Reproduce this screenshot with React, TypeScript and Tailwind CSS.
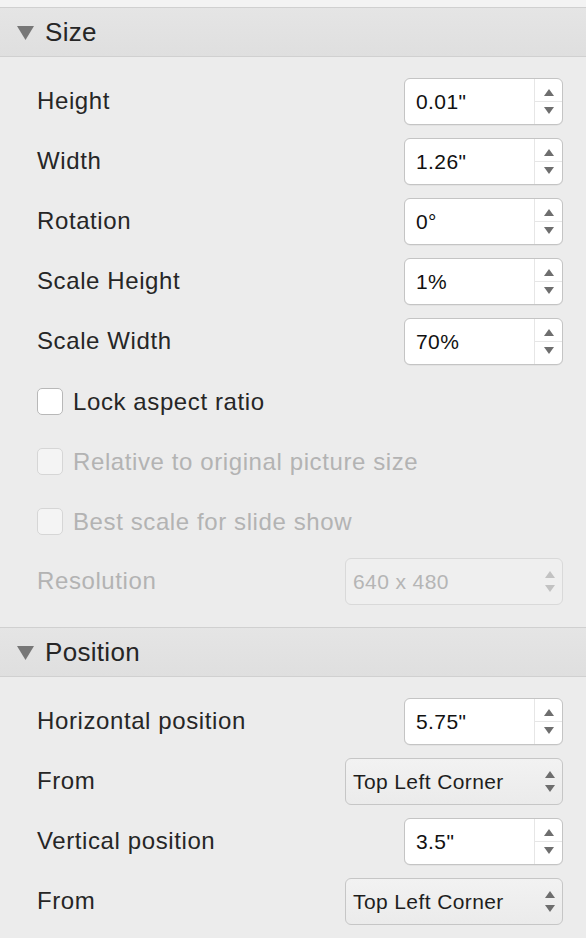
import React from 'react'

const font = { fontFamily: '"Liberation Sans", Arial, sans-serif' }

const Triangle = ({ up, className }: { up?: boolean; className?: string }) => (
    <svg width="10" height="7" viewBox="0 0 10 7" className={className}>
        {up ? <path d="M5 0 L10 7 L0 7 Z" fill="currentColor" /> : <path d="M0 0 L10 0 L5 7 Z" fill="currentColor" />}
    </svg>
)

const SectionHeader: React.FC<{ title: string }> = ({ title }) => (
    <div className="flex items-center h-[50px] border-y border-[#d0d0d0] bg-gradient-to-b from-[#e5e5e5] to-[#dfdfdf] pl-[17px]">
        <svg width="17" height="14" viewBox="0 0 17 14" className="mt-[2px]">
            <path d="M0 0 L17 0 L8.5 14 Z" fill="#777777" />
        </svg>
        <span className="ml-[11px] text-[26px] tracking-[0.3px] text-[#262626]">{title}</span>
    </div>
)

const NumberField: React.FC<{ value: string }> = ({ value }) => (
    <div className="flex w-[159px] h-[47px] bg-white border border-[#c4c4c4] rounded-[6px] shadow-[0_0.5px_0_rgba(0,0,0,0.08)]">
        <div className="flex-1 flex items-center pl-[11px] text-[21px] tracking-[0.4px] text-[#111]">{value}</div>
        <div className="w-[28px] flex flex-col py-[5px] border-l border-[#e6e6e6]">
            <div className="flex-1 flex items-center justify-center border-b border-[#e6e6e6] text-[#6e6e6e]">
                <Triangle up />
            </div>
            <div className="flex-1 flex items-center justify-center text-[#6e6e6e]">
                <Triangle />
            </div>
        </div>
    </div>
)

const SelectField: React.FC<{ value: string; disabled?: boolean }> = ({ value, disabled }) => (
    <div
        className={`flex items-center w-[218px] h-[47px] rounded-[6px] border pl-[7px] pr-[7px] ${
            disabled
                ? 'bg-[#efefef] border-[#d9d9d9] text-[#b5b5b5]'
                : 'bg-gradient-to-b from-[#f2f2f2] to-[#ebebeb] border-[#c6c6c6] text-[#1e1e1e]'
        }`}
    >
        <span className="flex-1 text-[21px] tracking-[0.4px]">{value}</span>
        <div className={`flex flex-col gap-[7px] ${disabled ? 'text-[#c2c2c2]' : 'text-[#6e6e6e]'}`}>
            <Triangle up />
            <Triangle />
        </div>
    </div>
)

const Row: React.FC<{ label: string; disabled?: boolean; children?: React.ReactNode }> = ({ label, disabled, children }) => (
    <div className="flex items-center justify-between h-[47px]">
        <span className={`text-[24px] tracking-[0.6px] -mt-[1px] ${disabled ? 'text-[#b3b3b3]' : 'text-[#262626]'}`}>{label}</span>
        {children}
    </div>
)

const CheckRow: React.FC<{ label: string; disabled?: boolean }> = ({ label, disabled }) => (
    <div className="flex items-center h-[47px]">
        <div
            className={`w-[26px] h-[27px] rounded-[5px] border ${
                disabled ? 'bg-[#f4f4f4] border-[#d6d6d6]' : 'bg-white border-[#b8b8b8]'
            }`}
        />
        <span className={`ml-[10px] text-[24px] tracking-[0.6px] ${disabled ? 'text-[#b3b3b3]' : 'text-[#262626]'}`}>{label}</span>
    </div>
)

export default function App() {
    return (
        <div className="w-[586px] h-[938px] bg-[#ececec] overflow-hidden" style={font}>
            <div className="h-[7px] bg-[#f3f3f3]" />
            <SectionHeader title="Size" />
            <div className="flex flex-col gap-[13px] pt-[21px] pb-[22px] pl-[37px] pr-[23px]">
                <Row label="Height"><NumberField value={'0.01"'} /></Row>
                <Row label="Width"><NumberField value={'1.26"'} /></Row>
                <Row label="Rotation"><NumberField value="0°" /></Row>
                <Row label="Scale Height"><NumberField value="1%" /></Row>
                <Row label="Scale Width"><NumberField value="70%" /></Row>
                <CheckRow label="Lock aspect ratio" />
                <CheckRow label="Relative to original picture size" disabled />
                <CheckRow label="Best scale for slide show" disabled />
                <Row label="Resolution" disabled><SelectField value="640 x 480" disabled /></Row>
            </div>
            <SectionHeader title="Position" />
            <div className="flex flex-col gap-[13px] pt-[21px] pl-[37px] pr-[23px]">
                <Row label="Horizontal position"><NumberField value={'5.75"'} /></Row>
                <Row label="From"><SelectField value="Top Left Corner" /></Row>
                <Row label="Vertical position"><NumberField value={'3.5"'} /></Row>
                <Row label="From"><SelectField value="Top Left Corner" /></Row>
            </div>
        </div>
    )
}
